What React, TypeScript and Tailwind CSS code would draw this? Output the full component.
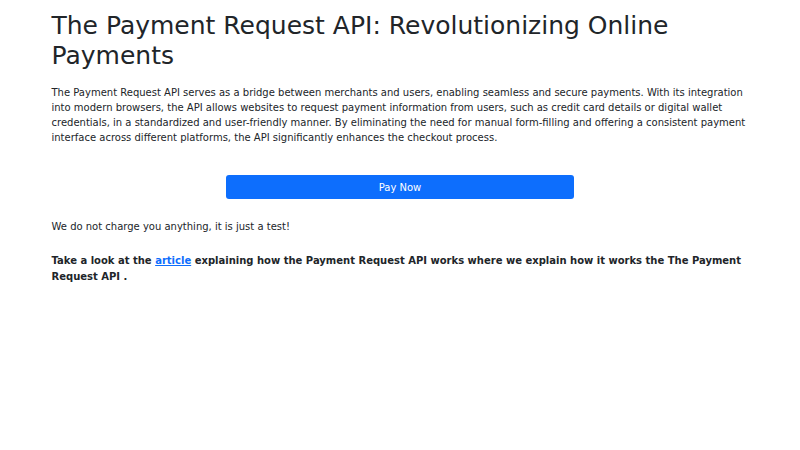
export default function App() {
  return (
    <div className="min-h-[450px] bg-white text-[#212529]" style={{ fontFamily: '"DejaVu Sans", sans-serif' }}>
      <div className="mx-auto w-[697px] pt-[11px]">
        <h1 className="text-[25px] leading-[30px] font-normal">
          The Payment Request API: Revolutionizing Online Payments
        </h1>
        <p className="mt-[14px] text-[10px] leading-[15px]">
          The Payment Request API serves as a bridge between merchants and users, enabling seamless and secure payments. With its integration into modern browsers, the API allows websites to request payment information from users, such as credit card details or digital wallet credentials, in a standardized and user-friendly manner. By eliminating the need for manual form-filling and offering a consistent payment interface across different platforms, the API significantly enhances the checkout process.
        </p>
        <div className="mt-[30px] flex justify-center">
          <button className="h-[24px] w-[348px] rounded-[3px] bg-[#0d6efd] text-[10px] text-white">
            Pay Now
          </button>
        </div>
        <p className="mt-[20px] text-[10px] leading-[15px]">
          We do not charge you anything, it is just a test!
        </p>
        <p className="mt-[19px] text-[10px] leading-[16px] font-bold">
          Take a look at the{" "}
          <a href="#" className="text-[#0d6efd] underline">
            article
          </a>{" "}
          explaining how the Payment Request API works where we explain how it works the The Payment Request API .
        </p>
      </div>
    </div>
  );
}
